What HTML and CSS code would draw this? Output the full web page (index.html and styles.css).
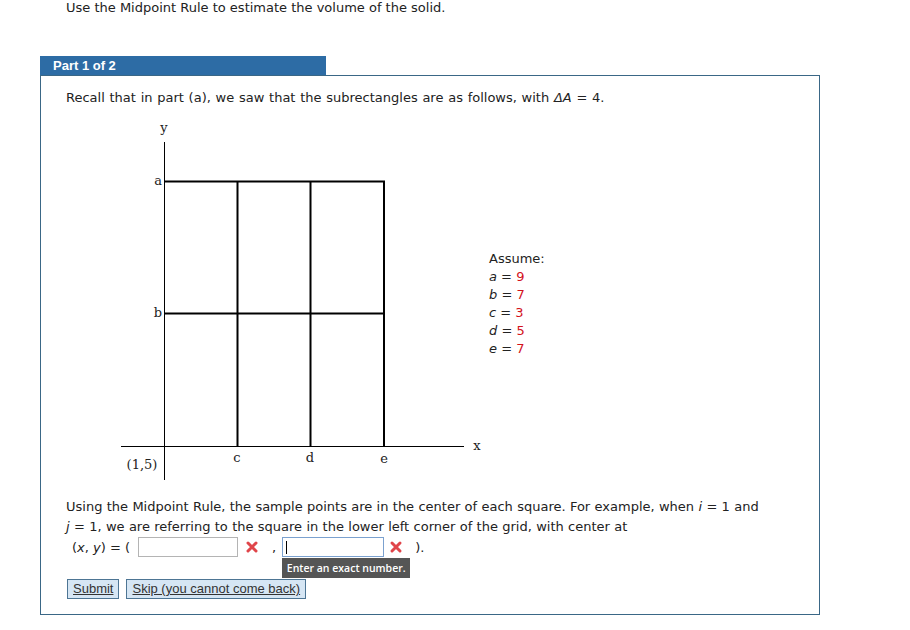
FILE: index.html
```html
<!DOCTYPE html>
<html>
<head>
<meta charset="utf-8">
<link rel="stylesheet" href="styles.css">
</head>
<body>
<p class="intro">Use the Midpoint Rule to estimate the volume of the solid.</p>
<div class="part">
  <div class="part-tab">Part 1 of 2</div>
  <div class="part-body">
    <p class="recall">Recall that in part (a), we saw that the subrectangles are as follows, with <i>&Delta;A</i> = 4.</p>
    <div class="figure">
      <svg class="graph" width="379" height="368" viewBox="0 0 379 368">
        <g stroke="#000" fill="none">
          <line x1="54.5" y1="30" x2="54.5" y2="368" stroke-width="1"/>
          <line x1="11" y1="334.5" x2="354" y2="334.5" stroke-width="1"/>
          <line x1="54" y1="69.5" x2="275" y2="69.5" stroke-width="2"/>
          <line x1="54" y1="201.5" x2="275" y2="201.5" stroke-width="2"/>
          <line x1="127.5" y1="69" x2="127.5" y2="334" stroke-width="2"/>
          <line x1="200.5" y1="69" x2="200.5" y2="334" stroke-width="2"/>
          <line x1="274" y1="69" x2="274" y2="334" stroke-width="2"/>
        </g>
        <g class="lbl">
          <text x="54" y="20" text-anchor="middle">y</text>
          <text x="52" y="73" text-anchor="end">a</text>
          <text x="52" y="205" text-anchor="end">b</text>
          <text x="127" y="350" text-anchor="middle">c</text>
          <text x="200" y="350" text-anchor="middle">d</text>
          <text x="274" y="351" text-anchor="middle">e</text>
          <text x="32" y="357" text-anchor="middle">(1,5)</text>
          <text x="367" y="338" text-anchor="middle">x</text>
        </g>
      </svg>
      <div class="assume">
        <div>Assume:</div>
        <div><i>a</i> = <span class="val">9</span></div>
        <div><i>b</i> = <span class="val">7</span></div>
        <div><i>c</i> = <span class="val">3</span></div>
        <div><i>d</i> = <span class="val">5</span></div>
        <div><i>e</i> = <span class="val">7</span></div>
      </div>
    </div>
    <p class="using">Using the Midpoint Rule, the sample points are in the center of each square. For example, when <i>i</i> = 1 and<br><i>j</i> = 1, we are referring to the square in the lower left corner of the grid, with center at</p>
    <div class="answer">
      <span class="lead">(<i>x</i>, <i>y</i>) = (</span>
      <input class="box" type="text">
      <svg class="xmark x1" width="14" height="14" viewBox="0 0 14 14"><path d="M3 3 L11 11 M11 3 L3 11" stroke="#e0454a" stroke-width="3" stroke-linecap="round"/></svg>
      <span class="comma">,</span>
      <span class="field focus">
        <input class="box focused" type="text">
        <span class="tooltip">Enter an exact number.</span>
      </span>
      <svg class="xmark x2" width="14" height="14" viewBox="0 0 14 14"><path d="M3 3 L11 11 M11 3 L3 11" stroke="#e0454a" stroke-width="3" stroke-linecap="round"/></svg>
      <span class="close">).</span>
    </div>
    <div class="buttons">
      <button class="btn" type="button">Submit</button>
      <button class="btn" type="button">Skip (you cannot come back)</button>
    </div>
  </div>
</div>
</body>
</html>
```
FILE: styles.css
```css
html, body {
  margin: 0;
  padding: 0;
  background: #fff;
}
body {
  font-family: "DejaVu Sans", Verdana, sans-serif;
  font-size: 13px;
  color: #222;
}
p { margin: 0; }
.intro {
  padding-left: 66px;
  line-height: 16px;
  padding-top: 0;
}
.part {
  margin-left: 40px;
  margin-top: 40px;
  width: 780px;
}
.part-tab {
  width: 273px;
  height: 19px;
  line-height: 19px;
  padding-left: 13px;
  background: #2d6ca5;
  color: #fff;
  font-family: "Liberation Sans", Arial, sans-serif;
  font-weight: bold;
  font-size: 13px;
}
.part-body {
  border: 1px solid #3a6786;
  padding: 12px 25px 15px 25px;
}
.recall { line-height: 20px; word-spacing: 0.6px; }
.figure {
  display: flex;
  margin-top: 4px;
}
.graph {
  display: block;
  margin-left: 44px;
  flex: none;
}
.lbl text {
  font-family: "DejaVu Serif", "Liberation Serif", serif;
  font-size: 13px;
  fill: #222;
}
.assume {
  margin-top: 138px;
  line-height: 18px;
}
.val { color: #d3111b; }
.using {
  margin-top: 17px;
  line-height: 20px;
  white-space: nowrap;
  word-spacing: 0.2px;
}
.answer {
  display: flex;
  align-items: center;
  height: 20px;
  position: relative;
}
.lead { margin-left: 6px; white-space: nowrap; }
.box {
  box-sizing: border-box;
  width: 100px;
  height: 20px;
  margin: 0 0 0 8px;
  padding: 0 3px;
  border: 1px solid #b4b4b4;
  outline: none;
  background: #fff;
  font: inherit;
  flex: none;
}
.box.focused { border-color: #7ba1cf; margin-left: 0; width: 102px; }
.field { position: relative; display: block; margin-left: 6px; height: 20px; flex: none; }
.focus::after {
  content: "";
  position: absolute;
  left: 4px;
  top: 4px;
  width: 1px;
  height: 13px;
  background: #000;
}
.xmark { display: block; flex: none; }
.x1 { margin-left: 7px; }
.x2 { margin-left: 5px; }
.comma { margin-left: 13px; }
.close { margin-left: 12px; }
.tooltip {
  position: absolute;
  left: 0;
  top: 21px;
  width: 128px;
  height: 20px;
  line-height: 20px;
  background: #555;
  color: #fff;
  font-family: "Open Sans", sans-serif;
  font-weight: 600;
  font-size: 10.5px;
  text-align: center;
  white-space: nowrap;
}
.buttons {
  display: flex;
  gap: 7px;
  margin-top: 22px;
  padding-left: 1px;
}
.btn {
  height: 20px;
  padding: 0 5px;
  border: 1px solid #4d7594;
  background: #d6e6f4;
  color: #333;
  font-family: "Liberation Sans", Arial, sans-serif;
  font-size: 13px;
  text-decoration: underline;
  line-height: 18px;
  border-radius: 0;
}
```
